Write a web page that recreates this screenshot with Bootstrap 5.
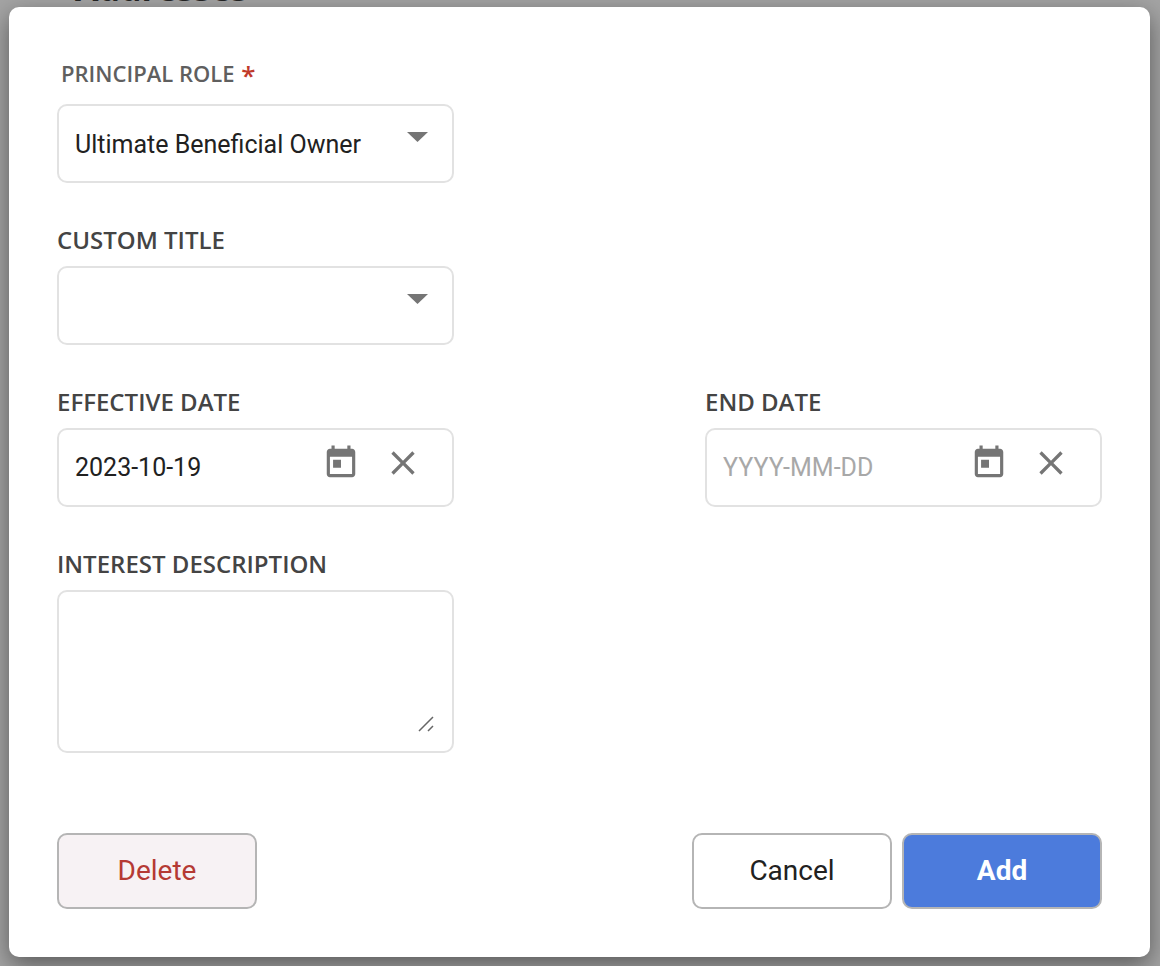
<!DOCTYPE html>
<html lang="en">
<head>
    <meta charset="UTF-8">
    <meta name="viewport" content="width=device-width, initial-scale=1.0">
    <title>Edit Principal</title>
    <link href="https://cdn.jsdelivr.net/npm/bootstrap@5.3.0/dist/css/bootstrap.min.css" rel="stylesheet">
    <style>
        body {
            background: #a4a4a4;
            height: 966px;
            overflow: hidden;
            font-family: Roboto, sans-serif;
        }
        .behind-title {
            height: 7px;
            overflow: hidden;
            padding-left: 75px;
            font-family: "Open Sans", sans-serif;
            font-size: 34px;
            font-weight: 700;
            color: #222;
        }
        .behind-title span {
            display: block;
            margin-top: -27px;
            line-height: 30px;
        }
        .dialog-panel {
            width: 1141px;
            height: 950px;
            margin-left: 9px;
            padding: 53px 48px 48px;
            background: #fff;
            border-radius: 10px;
            box-shadow: 0 8px 24px rgba(0,0,0,.45);
        }
        .field-grid {
            display: grid;
            grid-template-columns: 397px 397px;
            justify-content: space-between;
            row-gap: 43px;
        }
        .field-label {
            display: block;
            height: 28px;
            margin-bottom: 12px;
            font-family: "Open Sans", sans-serif;
            font-size: 24px;
            font-weight: 600;
            line-height: 28px;
            color: #444;
        }
        .field-label.is-required {
            padding-left: 4px;
            margin-bottom: 16px;
            font-size: 22px;
            line-height: 26px;
            color: #5f5f5f;
        }
        .field-label .req-mark {
            margin-left: 1px;
            font-size: 26px;
            line-height: 0;
            vertical-align: -3px;
            color: #c0392b;
        }
        .field-box {
            position: relative;
            display: flex;
            align-items: center;
            height: 79px;
            padding-left: 16px;
            background: #fff;
            border: 2px solid #e2e2e2;
            border-radius: 10px;
        }
        .field-box .form-control,
        .field-box .form-select {
            padding: 0;
            flex: 1 1 0;
            min-width: 0;
            border: 0;
            border-radius: 0;
            background: transparent;
            box-shadow: none;
            font-size: 25px;
            color: #212121;
        }
        .field-box .form-select {
            padding-top: 2px;
        }
        .field-box .form-control::placeholder {
            color: #a8a8a8;
        }
        .field-box.tall {
            height: 163px;
            align-items: stretch;
        }
        .field-box textarea.form-control {
            resize: none;
        }
        .select-caret {
            flex: none;
            margin: 0 24px 13px 0;
        }
        .date-icon {
            flex: none;
            margin-bottom: 10px;
        }
        .icon-clear {
            margin: 0 29px 10px 23px;
        }
        .resize-grip {
            position: absolute;
            right: 18px;
            bottom: 19px;
        }
        .button-row {
            margin-top: 80px;
        }
        .button-pair {
            gap: 10px;
        }
        .action-btn {
            width: 200px;
            height: 76px;
            padding: 0;
            border: 2px solid #b5b5b5;
            border-radius: 10px;
            font-family: Roboto, sans-serif;
            font-size: 28px;
        }
        .action-delete, .action-delete:hover {
            background: #f7f2f4;
            border-color: #b5b5b5;
            color: #b53a34;
        }
        .action-cancel, .action-cancel:hover {
            background: #fff;
            border-color: #b5b5b5;
            color: #212121;
        }
        .action-add, .action-add:hover {
            background: #4c7bdc;
            border-color: #b5b5b5;
            color: #fff;
            font-weight: 700;
        }
        .no-arrow {
            background-image: none;
        }
    </style>
</head>
<body>
    <div class="behind-title"><span>Addresses</span></div>
    <div class="dialog-panel d-flex flex-column">
        <form class="field-grid">
            <div>
                <label class="field-label is-required" for="role">PRINCIPAL ROLE <span class="req-mark">*</span></label>
                <div class="field-box">
                    <select class="form-select no-arrow" id="role">
                        <option>Ultimate Beneficial Owner</option>
                    </select>
                    <svg class="select-caret" width="21" height="10" viewBox="0 0 21 10"><path d="M0 0h21L10.500 10z" fill="#757575"/></svg>
                </div>
            </div>
            <div></div>

            <div>
                <label class="field-label" for="title">CUSTOM TITLE</label>
                <div class="field-box">
                    <select class="form-select no-arrow" id="title"><option></option></select>
                    <svg class="select-caret" width="21" height="10" viewBox="0 0 21 10"><path d="M0 0h21L10.500 10z" fill="#757575"/></svg>
                </div>
            </div>
            <div></div>

            <div>
                <label class="field-label" for="effective">EFFECTIVE DATE</label>
                <div class="field-box">
                    <input class="form-control" id="effective" type="text" value="2023-10-19" placeholder="YYYY-MM-DD">
                    <svg class="date-icon" width="38" height="38" viewBox="0 0 24 24"><path fill="#757575" d="M19 3h-1V1h-2v2H8V1H6v2H5c-1.110 0-1.990.9-1.990 2L3 19c0 1.100.89 2 2 2h14c1.100 0 2-.9 2-2V5c0-1.100-.9-2-2-2zm0 16H5V8h14v11zM7 10h5v5H7z"/></svg>
                    <svg class="date-icon icon-clear" width="40" height="40" viewBox="0 0 24 24"><path fill="#757575" d="M19 6.410 17.590 5 12 10.590 6.410 5 5 6.410 10.590 12 5 17.590 6.410 19 12 13.410 17.590 19 19 17.590 13.410 12z"/></svg>
                </div>
            </div>
            <div>
                <label class="field-label" for="end">END DATE</label>
                <div class="field-box">
                    <input class="form-control" id="end" type="text" placeholder="YYYY-MM-DD">
                    <svg class="date-icon" width="38" height="38" viewBox="0 0 24 24"><path fill="#757575" d="M19 3h-1V1h-2v2H8V1H6v2H5c-1.110 0-1.990.9-1.990 2L3 19c0 1.100.89 2 2 2h14c1.100 0 2-.9 2-2V5c0-1.100-.9-2-2-2zm0 16H5V8h14v11zM7 10h5v5H7z"/></svg>
                    <svg class="date-icon icon-clear" width="40" height="40" viewBox="0 0 24 24"><path fill="#757575" d="M19 6.410 17.590 5 12 10.590 6.410 5 5 6.410 10.590 12 5 17.590 6.410 19 12 13.410 17.590 19 19 17.590 13.410 12z"/></svg>
                </div>
            </div>

            <div>
                <label class="field-label" for="interest">INTEREST DESCRIPTION</label>
                <div class="field-box tall">
                    <textarea class="form-control" id="interest"></textarea>
                    <svg class="resize-grip" width="16" height="16" viewBox="0 0 16 16"><path d="M1 15 15 1M10 15l5-5" stroke="#666" stroke-width="1.500" fill="none"/></svg>
                </div>
            </div>
            <div></div>
        </form>

        <div class="button-row d-flex justify-content-between">
            <button type="button" class="btn action-btn action-delete">Delete</button>
            <div class="button-pair d-flex">
                <button type="button" class="btn action-btn action-cancel">Cancel</button>
                <button type="button" class="btn action-btn action-add">Add</button>
            </div>
        </div>
    </div>
    <script src="https://cdn.jsdelivr.net/npm/bootstrap@5.3.0/dist/js/bootstrap.bundle.min.js"></script>
</body>
</html>
